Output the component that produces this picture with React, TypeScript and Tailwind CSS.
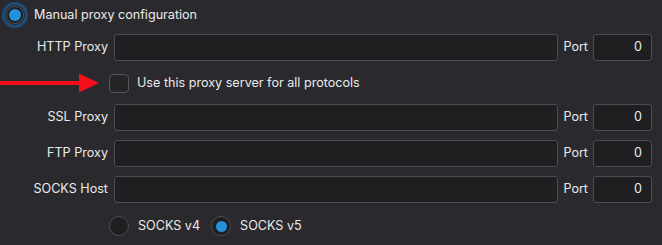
import React from 'react';

const font = { fontFamily: 'Inter, "Liberation Sans", Arial, sans-serif' };

function ProxyRow({ label, top }: { label: string; top: string }) {
  return (
    <div className={`flex items-center h-[27px] ${top}`}>
      <div className="w-[108px] text-right text-[12.6px] text-[#ebebeb]">{label}</div>
      <div className="ml-[6px] flex-1 h-[27px] rounded-[3px] border border-[#4e4e52] bg-[#1f1f21]" />
      <div className="mx-[5px] text-[12.6px] text-[#ebebeb]">Port</div>
      <div className="w-[59px] h-[27px] rounded-[3px] border border-[#4e4e52] bg-[#1f1f21] flex items-center justify-end pr-[9px] text-[12.6px] text-[#ebebeb]">
        0
      </div>
    </div>
  );
}

function Radio({ checked }: { checked?: boolean }) {
  return (
    <div className="w-[20px] h-[20px] rounded-full border border-[#4e4e52] bg-[#1f1f21] flex items-center justify-center">
      {checked && <div className="w-[11px] h-[11px] rounded-full bg-[#2391dc]" />}
    </div>
  );
}

export default function App() {
  return (
    <div className="w-[662px] h-[245px] bg-[#2a292e] pr-[10px] overflow-hidden" style={font}>
      {/* Manual proxy radio */}
      <div className="flex items-center h-[30px]">
        <div className="ml-[2px] w-[26px] h-[26px] rounded-full border-[3px] border-[#1d4d78] flex items-center justify-center">
          <div className="w-[18px] h-[18px] rounded-full border border-[#4e4e52] bg-[#1f1f21] flex items-center justify-center">
            <div className="w-[12px] h-[12px] rounded-full bg-[#2391dc]" />
          </div>
        </div>
        <span className="ml-[6px] text-[12.6px] text-[#ebebeb]">Manual proxy configuration</span>
      </div>

      <ProxyRow label="HTTP Proxy" top="mt-[4px]" />

      {/* Use for all protocols */}
      <div className="flex items-center h-[20px] mt-[12px]">
        <svg width="100" height="20" viewBox="0 0 100 20" className="shrink-0">
          <rect x="0" y="8" width="80" height="4" fill="#f4101a" />
          <polygon points="79,0.5 99,10 79,19.5" fill="#f4101a" />
        </svg>
        <div className="ml-[9px] w-[20px] h-[19px] rounded-[4px] border border-[#56565a] bg-[#252528]" />
        <span className="ml-[8px] text-[12.6px] text-[#ebebeb]">Use this proxy server for all protocols</span>
      </div>

      <ProxyRow label="SSL Proxy" top="mt-[11px]" />
      <ProxyRow label="FTP Proxy" top="mt-[9px]" />
      <ProxyRow label="SOCKS Host" top="mt-[9px]" />

      {/* SOCKS version */}
      <div className="flex items-center h-[20px] mt-[13px] pl-[109px]">
        <Radio />
        <span className="ml-[9px] text-[12.6px] text-[#ebebeb]">SOCKS v4</span>
        <div className="ml-[11px]">
          <Radio checked />
        </div>
        <span className="ml-[9px] text-[12.6px] text-[#ebebeb]">SOCKS v5</span>
      </div>
    </div>
  );
}
